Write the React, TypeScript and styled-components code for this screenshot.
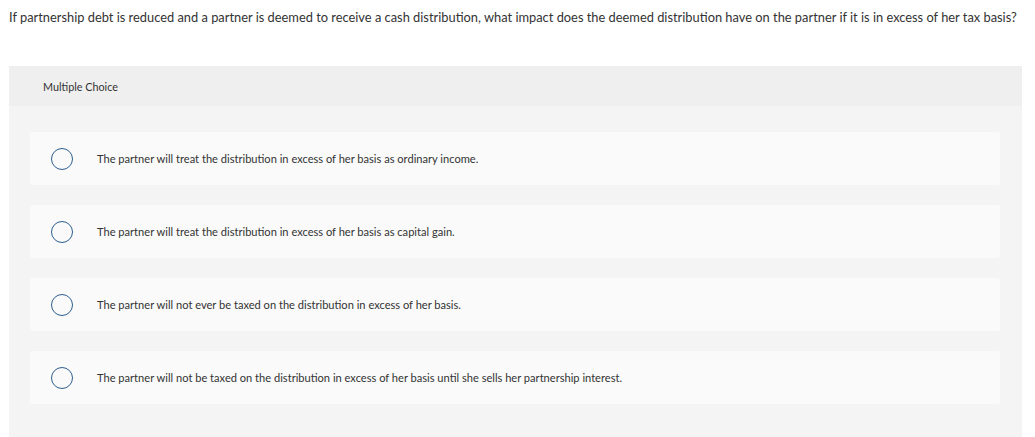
import styled, {createGlobalStyle} from "styled-components";

const GlobalStyle = createGlobalStyle`
  body {
    margin: 0;
    background: #ffffff;
    font-family: Lato, "Open Sans", sans-serif;
    color: #333333;
  }
`

const Page = styled.div`
  padding: 9px 13px 0 9px;
`

const Question = styled.p`
  margin: 0;
  font-size: 12.85px;
  line-height: 16px;
  color: #333333;
  white-space: nowrap;
`

const Panel = styled.div`
  margin-top: 41px;
  background: #f4f4f4;
  padding-bottom: 40px;
`

const PanelHead = styled.div`
  height: 40px;
  background: #efefef;
  display: flex;
  align-items: center;
  padding-left: 34px;
  font-size: 10.8px;
  color: #333333;
`

const Choices = styled.div`
  display: flex;
  flex-direction: column;
  gap: 20px;
  padding: 26px 22px 0 21px;
`

const Choice = styled.label`
  height: 53px;
  background: #fafafa;
  border-radius: 3px;
  display: flex;
  align-items: center;
  gap: 24px;
  padding-left: 21px;
  cursor: pointer;
`

const Radio = styled.span`
  width: 20px;
  height: 20px;
  border: 1.5px solid #2d5f8f;
  border-radius: 50%;
  flex-shrink: 0;
`

const ChoiceText = styled.span`
  font-size: 11.1px;
  color: #333333;
`

const choices = [
  "The partner will treat the distribution in excess of her basis as ordinary income.",
  "The partner will treat the distribution in excess of her basis as capital gain.",
  "The partner will not ever be taxed on the distribution in excess of her basis.",
  "The partner will not be taxed on the distribution in excess of her basis until she sells her partnership interest.",
];

const App = () => {
  return (
    <Page>
      <GlobalStyle/>
      <Question>
        If partnership debt is reduced and a partner is deemed to receive a cash distribution, what impact does the deemed distribution have on the partner if it is in excess of her tax basis?
      </Question>
      <Panel>
        <PanelHead>Multiple Choice</PanelHead>
        <Choices>
          {choices.map(text => (
            <Choice key={text}>
              <Radio/>
              <ChoiceText>{text}</ChoiceText>
            </Choice>
          ))}
        </Choices>
      </Panel>
    </Page>
  );
}

export default App;
